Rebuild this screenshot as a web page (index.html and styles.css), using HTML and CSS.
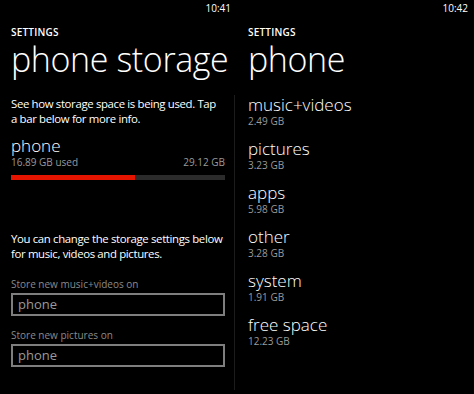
FILE: index.html
```html
<!DOCTYPE html>
<html lang="en">

<head>
	<meta charset="UTF-8">
	<meta name="viewport" content="width=device-width, initial-scale=1.0">
	<title>Phone storage</title>
	<link rel="stylesheet" href="styles.css">
</head>

<body>
	<div class="screens">
		<section class="screen storage">
			<div class="status">10:41</div>
			<div class="app-title">SETTINGS</div>
			<h1 class="page-title">phone storage</h1>
			<p class="intro first">See how storage space is being used. Tap a bar below for more info.</p>
			<div class="drive">
				<div class="drive-name">phone</div>
				<div class="drive-info">
					<span>16.89 GB used</span>
					<span>29.12 GB</span>
				</div>
				<div class="bar"><div class="bar-fill" style="width: 58%"></div></div>
			</div>
			<p class="intro change">You can change the storage settings below for music, videos and pictures.</p>
			<label class="picker-label">Store new music+videos on</label>
			<div class="picker">phone</div>
			<label class="picker-label">Store new pictures on</label>
			<div class="picker">phone</div>
			<div class="scrollbar"></div>
		</section>
		<section class="screen breakdown">
			<div class="status">10:42</div>
			<div class="app-title">SETTINGS</div>
			<h1 class="page-title">phone</h1>
			<ul class="categories">
				<li><span class="cat-name">music+videos</span><span class="cat-size">2.49 GB</span></li>
				<li><span class="cat-name">pictures</span><span class="cat-size">3.23 GB</span></li>
				<li><span class="cat-name">apps</span><span class="cat-size">5.98 GB</span></li>
				<li><span class="cat-name">other</span><span class="cat-size">3.28 GB</span></li>
				<li><span class="cat-name">system</span><span class="cat-size">1.91 GB</span></li>
				<li><span class="cat-name">free space</span><span class="cat-size">12.23 GB</span></li>
			</ul>
		</section>
	</div>
</body>

</html>
```

FILE: styles.css
```css
body {
	--fgcolor: #ffffff;
	--subtle: #9a9a9a;
	--accent: #e51400;
	background: #000;
	color: var(--fgcolor);
	font-family: "Open Sans", "Noto Sans", sans-serif;
	margin: 0;
}

.screens {
	display: grid;
	grid-template-columns: 237px 237px;
	height: 394px;
	overflow: hidden;
}

.screen {
	position: relative;
	padding: 0 12px 0 11px;
}

.status {
	font-size: 10px;
	text-align: right;
	height: 16px;
	line-height: 16px;
	margin-right: -6px;
}

.app-title {
	font-size: 10px;
	font-weight: 600;
	letter-spacing: 0.2px;
	margin-top: 9px;
	line-height: 14px;
}

.page-title {
	font-size: 34px;
	font-weight: 300;
	letter-spacing: -0.4px;
	line-height: 40px;
	margin: 0;
	white-space: nowrap;
}

.intro {
	font-size: 11.4px;
	letter-spacing: -0.35px;
	line-height: 15px;
	margin: 17px 0 0;
}

.intro.first {
	padding-right: 8px;
}

.drive {
	margin-top: 10px;
}

.drive-name {
	font-size: 17px;
	line-height: 20px;
	font-weight: 300;
}

.drive-info {
	display: flex;
	justify-content: space-between;
	font-size: 10px;
	color: var(--subtle);
	line-height: 12px;
}

.bar {
	background: #2b2b2b;
	height: 5px;
	margin-top: 7px;
}

.bar-fill {
	background: var(--accent);
	height: 100%;
}

.intro.change {
	margin: 51px -5px 0 0;
}

.picker-label {
	display: block;
	font-size: 10px;
	color: #8a8a8a;
	margin-top: 16px;
	line-height: 14px;
}

.picker {
	border: 2px solid #7e7e7e;
	height: 19px;
	margin-top: 2px;
	padding: 0 5px;
	font-size: 13px;
	line-height: 19px;
	color: #9a9a9a;
}

.picker + .picker-label {
	margin-top: 12px;
}

.scrollbar {
	position: absolute;
	right: 2px;
	top: 95px;
	bottom: 4px;
	width: 1px;
	background: #1c1c1c;
}

.categories {
	list-style: none;
	margin: 16px 0 0;
	padding: 0;
}

.categories li {
	display: flex;
	flex-direction: column;
	height: 44px;
}

.cat-name {
	font-size: 17px;
	font-weight: 300;
	line-height: 20px;
}

.cat-size {
	font-size: 10px;
	color: var(--subtle);
	line-height: 12px;
}
```
